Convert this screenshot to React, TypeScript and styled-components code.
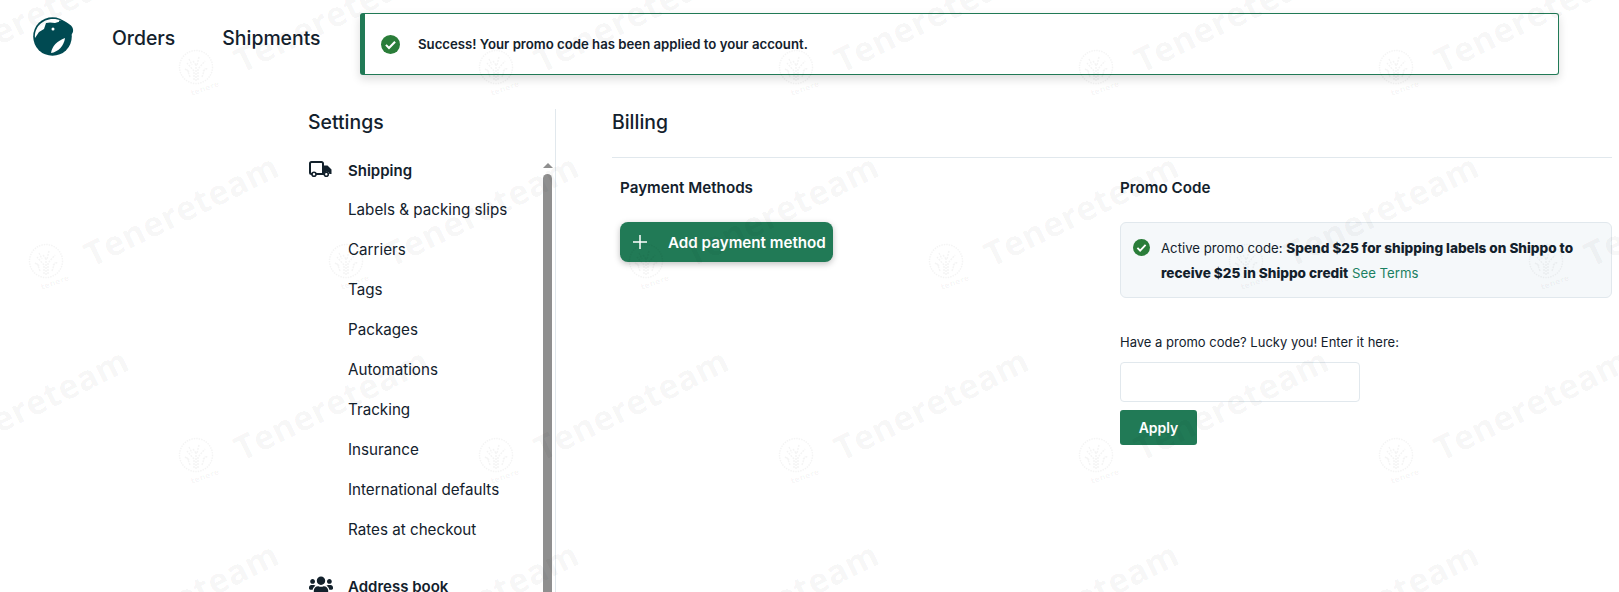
import React from "react";
import styled, { createGlobalStyle } from "styled-components";
import { FaUsers } from "react-icons/fa";

const Global = createGlobalStyle`
  html, body { margin: 0; padding: 0; background: #fff; }
  body { font-family: Inter, "Noto Sans", "Liberation Sans", sans-serif; color: #13212c; }
  * { box-sizing: border-box; }
`;

const Page = styled.div`
  position: relative;
  width: 1619px;
  height: 592px;
  overflow: hidden;
  background: #fff;
`;

const Header = styled.header`
  display: flex;
  align-items: flex-start;
  height: 109px;
  padding: 13px 7px 0 33px;
`;

const LogoMark = styled.svg`
  width: 41px;
  height: 39px;
  margin-top: 4px;
  flex: none;
`;

const TopNav = styled.nav`
  display: flex;
  gap: 47px;
  margin-left: 38px;
  width: 248px;
  flex: none;
  padding-top: 14px;
`;

const TopLink = styled.a`
  font-size: 19.4px;
  line-height: 22px;
  font-weight: 500;
  color: #13212c;
`;

const Toast = styled.div`
  display: flex;
  align-items: center;
  gap: 18px;
  width: 1199px;
  height: 62px;
  padding-left: 16px;
  background: #fff;
  border: 1px solid #217a56;
  border-left: 5px solid #217a56;
  border-radius: 3px;
  box-shadow: 0 4px 10px rgba(0, 0, 0, 0.14);
  font-size: 13.2px;
  font-weight: 600;
`;

const Main = styled.main`
  display: flex;
  height: 483px;
  padding-left: 308px;
`;

const Sidebar = styled.aside`
  display: flex;
  flex-direction: column;
  width: 248px;
  flex: none;
  border-right: 1px solid #e1e8ed;
  padding-right: 3px;
`;

const PanelTitle = styled.h2`
  margin: 3px 0 0;
  font-size: 19.4px;
  line-height: 20px;
  font-weight: 500;
`;

const SideBody = styled.div`
  display: flex;
  flex: 1;
  min-height: 0;
  margin-top: 17px;
`;

const SideList = styled.div`
  flex: 1;
  min-width: 0;
`;

const SideHead = styled.div`
  display: flex;
  align-items: center;
  height: 40px;
  padding-top: 2px;
  font-size: 15px;
  font-weight: 600;
  margin-top: ${(p: { $gap?: number }) => p.$gap ?? 0}px;
`;

const IconSlot = styled.span`
  display: flex;
  align-items: center;
  width: 40px;
  flex: none;
  margin-top: -2px;
  padding-left: 1px;
`;

const SideItem = styled.a`
  display: flex;
  align-items: center;
  height: 40px;
  padding-left: 40px;
  font-size: 15.2px;
  color: #13212c;
`;

const ScrollRail = styled.div`
  display: flex;
  flex-direction: column;
  align-items: center;
  width: 9px;
  flex: none;
  padding-top: 14px;
`;

const ScrollArrow = styled.div`
  width: 0;
  height: 0;
  border-left: 5px solid transparent;
  border-right: 5px solid transparent;
  border-bottom: 5px solid #8f8f8f;
`;

const ScrollThumb = styled.div`
  flex: 1;
  width: 9px;
  margin-top: 6px;
  background: #8f8f8f;
  border-radius: 5px 5px 0 0;
`;

const Content = styled.section`
  width: 1000px;
  margin-left: 56px;
  flex: none;
`;

const BillingHead = styled.div`
  height: 46px;
  border-bottom: 1px solid #e1e8ed;
`;

const Columns = styled.div`
  display: grid;
  grid-template-columns: 500px 492px;
  padding: 20px 0 0 8px;
`;

const Col = styled.div``;

const SectionTitle = styled.h3`
  margin: 0;
  font-size: 15.2px;
  line-height: 20px;
  font-weight: 600;
`;

const AddButton = styled.button`
  display: flex;
  align-items: center;
  width: 213px;
  height: 40px;
  margin-top: 24px;
  padding: 0 0 0 12px;
  border: none;
  border-radius: 8px;
  background: #217a56;
  color: #fff;
  font: 600 15.2px Inter, sans-serif;
  box-shadow: 0 2px 6px rgba(0, 0, 0, 0.25);
`;

const AddLabel = styled.span`
  margin-left: 20px;
`;

const PromoCard = styled.div`
  display: flex;
  gap: 11px;
  width: 492px;
  height: 76px;
  margin-top: 24px;
  padding: 13px 12px 0;
  background: #f5f8fa;
  border: 1px solid #e1e8ed;
  border-radius: 6px;
  font-size: 13.2px;
  line-height: 25px;
`;

const CheckSlot = styled.span`
  flex: none;
  margin: 3px 0 0 0;
  height: 17px;
`;

const Strong = styled.b`
  font-size: 13.6px;
  font-weight: 800;
`;

const TermsLink = styled.a`
  color: #1a8062;
`;

const PromoLabel = styled.label`
  display: block;
  margin: 34px 0 0 0;
  font-size: 13px;
  line-height: 20px;
`;

const CodeInput = styled.input`
  display: block;
  width: 240px;
  height: 40px;
  margin-top: 10px;
  background: #fff;
  border: 1px solid #e1e8ed;
  border-radius: 4px;
`;

const ApplyButton = styled.button`
  display: block;
  width: 77px;
  height: 35px;
  margin-top: 8px;
  padding: 0;
  border: none;
  border-radius: 3px;
  background: #217a56;
  color: #fff;
  font: 600 14px Inter, sans-serif;
`;

const Watermarks = styled.div`
  position: absolute;
  inset: 0;
  pointer-events: none;
  color: rgba(0, 0, 0, 0.042);
`;

const MarkLogo = styled.svg`
  position: absolute;
  width: 44px;
  height: 50px;
`;

const MarkText = styled.span`
  position: absolute;
  font-size: 34px;
  line-height: 40px;
  font-weight: 700;
  letter-spacing: 0.5px;
  white-space: nowrap;
  transform: rotate(-26deg);
  transform-origin: 0 50%;
  font-family: "Open Sans", sans-serif;
`;

const CheckIcon = ({ size }: { size: number }) => (
  <svg width={size} height={size} viewBox="0 0 20 20" style={{ display: "block", flex: "none" }}>
    <circle cx="10" cy="10" r="10" fill="#2a7d39" />
    <path d="M5.2 10.4l3.2 3.2 6.4-6.6" fill="none" stroke="#fff" strokeWidth="2.2" />
  </svg>
);

const TruckIcon = () => (
  <svg width="23" height="16" viewBox="0 0 23 16">
    <path d="M3 13H2.500A1.500 1.500 0 0 1 1 11.500V2.500A1.500 1.500 0 0 1 2.500 1h10A1.500 1.500 0 0 1 14 2.500V13H7" fill="none" stroke="#13212c" strokeWidth="2" />
    <path d="M14 4.500h4.500l4 4V13h-2a2.800 2.800 0 0 0-5.500 0h-1z" fill="#13212c" />
    <circle cx="5" cy="13.200" r="2" fill="#fff" stroke="#13212c" strokeWidth="1.600" />
    <circle cx="17.300" cy="13.200" r="2" fill="#fff" stroke="#13212c" strokeWidth="1.600" />
  </svg>
);

const sideItems = ["Labels & packing slips", "Carriers", "Tags", "Packages", "Automations", "Tracking", "Insurance", "International defaults", "Rates at checkout"];

const marks: { x: number; y: number }[] = [];
for (let r = -1; r < 4; r++) {
  for (let c = -1; c < 7; c++) {
    marks.push({ x: 196 + c * 300 - (r % 2 !== 0 ? 150 : 0), y: 68 + r * 194 });
  }
}

export default function App() {
  return (
    <Page>
      <Global />
      <Header>
        <LogoMark viewBox="0 0 41 39">
          <circle cx="19.500" cy="19.500" r="19.300" fill="#004a52" />
          <path d="M2 21C1 11 9 2 20 2c3 0 6 .5 8.500 2L22 6l-5-.500-4 .500-2 6-5 3z" fill="#fff" />
          <path d="M26 3.500c4-.5 8 1.500 12 5 3 3 3 8-1 10-4 2-8 3-11 4z" fill="#004a52" />
          <path d="M18 36c1-7 6-12 14-15-1 8-7 14-14 15z" fill="#fff" />
          <circle cx="20" cy="12" r="1.500" fill="#fff" />
        </LogoMark>
        <TopNav>
          <TopLink>Orders</TopLink>
          <TopLink>Shipments</TopLink>
        </TopNav>
        <Toast>
          <CheckIcon size={19} />
          Success! Your promo code has been applied to your account.
        </Toast>
      </Header>
      <Main>
        <Sidebar>
          <PanelTitle>Settings</PanelTitle>
          <SideBody>
            <SideList>
              <SideHead>
                <IconSlot><TruckIcon /></IconSlot>
                Shipping
              </SideHead>
              {sideItems.map((s) => (
                <SideItem key={s}>{s}</SideItem>
              ))}
              <SideHead $gap={16}>
                <IconSlot><FaUsers size={24} color="#13212c" /></IconSlot>
                Address book
              </SideHead>
            </SideList>
            <ScrollRail>
              <ScrollArrow />
              <ScrollThumb />
            </ScrollRail>
          </SideBody>
        </Sidebar>
        <Content>
          <BillingHead>
            <PanelTitle>Billing</PanelTitle>
          </BillingHead>
          <Columns>
            <Col>
              <SectionTitle>Payment Methods</SectionTitle>
              <AddButton>
                <svg width="16" height="16" viewBox="0 0 16 16">
                  <path d="M8 1v14M1 8h14" stroke="#fff" strokeWidth="1.500" />
                </svg>
                <AddLabel>Add payment method</AddLabel>
              </AddButton>
            </Col>
            <Col>
              <SectionTitle>Promo Code</SectionTitle>
              <PromoCard>
                <CheckSlot><CheckIcon size={17} /></CheckSlot>
                <div>
                  Active promo code: <Strong>Spend $25 for shipping labels on Shippo to receive $25 in Shippo credit</Strong>{" "}
                  <TermsLink>See Terms</TermsLink>
                </div>
              </PromoCard>
              <PromoLabel>Have a promo code? Lucky you! Enter it here:</PromoLabel>
              <CodeInput />
              <ApplyButton>Apply</ApplyButton>
            </Col>
          </Columns>
        </Content>
      </Main>
      <Watermarks>
        {marks.map((m) => (
          <React.Fragment key={`${m.x}-${m.y}`}>
            <MarkLogo viewBox="0 0 44 50" style={{ left: m.x - 18, top: m.y - 19 }}>
              <circle cx="18" cy="18" r="16.500" fill="none" stroke="currentColor" strokeWidth="1.500" strokeDasharray="1.500 1" />
              <path d="M18 32V16M16 31V22l-7-8M20 31V20l7-8M12 28l-3-8M24 28l3-9M15 12l3 4M21 8l-2 8M11 10l3 6M25 22l5-3M7 20l5 3" fill="none" stroke="currentColor" strokeWidth="1.500" strokeDasharray="2 1" />
              <text x="14" y="47" fontSize="8" fontWeight="700" fill="currentColor" transform="rotate(-20 14 47)" fontFamily="DejaVu Sans, sans-serif">tenere</text>
            </MarkLogo>
            <MarkText style={{ left: m.x + 40, top: m.y - 26 }}>Tenereteam</MarkText>
          </React.Fragment>
        ))}
      </Watermarks>
    </Page>
  );
}
